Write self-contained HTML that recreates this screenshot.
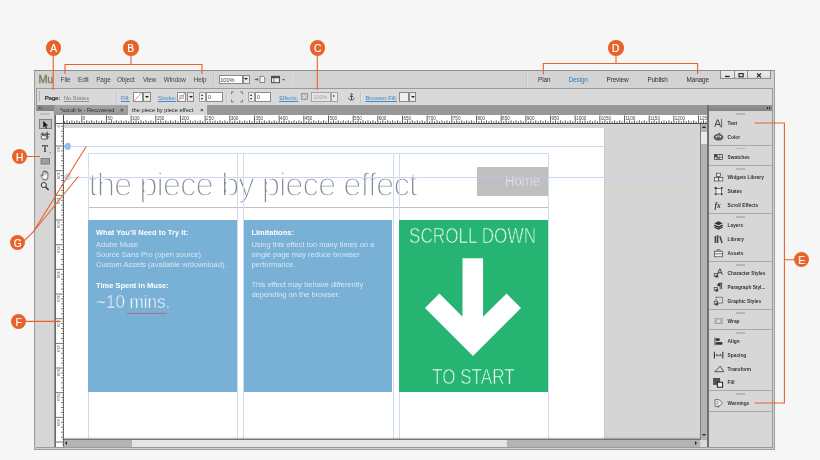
<!DOCTYPE html>
<html><head><meta charset="utf-8"><title>Adobe Muse workspace</title>
<style>
html,body{margin:0;padding:0}
body{width:820px;height:460px;position:relative;overflow:hidden;background:#f6f6f6;font-family:"Liberation Sans",sans-serif;color:#333}
.a{position:absolute}
.t{position:absolute;white-space:nowrap;line-height:1}
.box{position:absolute;background:#fff;border:0.5px solid #8a8a8a;box-sizing:border-box}
.dd{position:absolute;background:#e9e9e9;border:0.5px solid #8a8a8a;box-sizing:border-box}
.sep{position:absolute;width:.8px;background:#c6c6c6;border-right:.8px solid #dfdfdf}
.psep{position:absolute;left:709px;width:63px;height:1px;background:#a9a9a9}
.grip{position:absolute;left:736px;width:9.4px;height:1.5px;background:#b7b7b7}
.rl{position:absolute;font-size:3.6px;color:#444;line-height:1;white-space:nowrap}
.bt{position:absolute;white-space:nowrap;line-height:1;color:#fff;font-size:7.5px}
.lt{color:rgba(255,255,255,.7)}
.circ{position:absolute;width:15.4px;height:15.4px;border-radius:7.7px;background:#e8622c}
.cl{position:absolute;width:15.4px;height:15.4px;color:#fff;font-size:11.4px;line-height:17.6px;text-align:center;-webkit-text-stroke:.2px #fff;transform:scaleX(.9)}
</style></head><body><div id="root" style="position:absolute;left:0;top:0;width:820px;height:460px;will-change:transform">

<div class="a" style="left:34px;top:70px;width:740.6px;height:379.6px;background:#d2d2d2;border:1px solid #9c9c9c;border-top-color:#8c8c8c;box-sizing:border-box"></div>
<div class="a" style="left:35.8px;top:87.6px;width:737.2px;height:360.4px;background:#d6d6d6;border:.9px solid #9a9a9a;box-sizing:border-box"></div>
<div class="a" style="left:35px;top:71px;width:738.6px;height:16.6px;background:#d3d3d3"></div>
<div class="a" style="left:36.7px;top:88.5px;width:735.4px;height:16.4px;background:#d9d9d9;box-sizing:border-box"></div>
<div class="t" style="left:38.6px;top:74px;font-size:10.8px;color:#757b55;letter-spacing:-.3px;-webkit-text-stroke:.3px #757b55;">Mu</div>
<div class="t" style="left:60.6px;top:77px;font-size:6.4px;color:#444;letter-spacing:-.12px;">File</div>
<div class="t" style="left:78px;top:77px;font-size:6.4px;color:#444;letter-spacing:-.12px;">Edit</div>
<div class="t" style="left:96.2px;top:77px;font-size:6.4px;color:#444;letter-spacing:-.12px;">Page</div>
<div class="t" style="left:117px;top:77px;font-size:6.4px;color:#444;letter-spacing:-.12px;">Object</div>
<div class="t" style="left:143px;top:77px;font-size:6.4px;color:#444;letter-spacing:-.12px;">View</div>
<div class="t" style="left:163.8px;top:77px;font-size:6.4px;color:#444;letter-spacing:-.12px;">Window</div>
<div class="t" style="left:193.8px;top:77px;font-size:6.4px;color:#444;letter-spacing:-.12px;">Help</div>
<div class="sep" style="left:213px;top:73px;height:12px"></div>
<div class="box" style="left:218.5px;top:74.5px;width:24px;height:9px"></div>
<div class="t" style="left:220.2px;top:78px;font-size:5.6px;color:#3a3a3a;">100%</div>
<div class="dd" style="left:242.5px;top:74.5px;width:7.5px;height:9px"></div>
<div class="a" style="left:244.25px;top:77.8px;border:2px solid transparent;border-top:2.6px solid #222;border-bottom:0"></div>
<svg class="a" style="left:254px;top:73.5px" width="34" height="11" viewBox="0 0 34 11">
<path d="M.8 5.4h3M2.8 4.2l1.3 1.2-1.3 1.2" stroke="#444" stroke-width=".9" fill="none"/>
<path d="M6 2.3h3.4l1.4 1.4v4.8H6z" fill="#f4f4f4" stroke="#555" stroke-width=".7"/>
<rect x="17.6" y="2.3" width="7.8" height="6.4" fill="#ededed" stroke="#3c3c3c" stroke-width=".9"/>
<rect x="17.6" y="2.3" width="7.8" height="1.9" fill="#484848"/>
<path d="M20 4.2v4.5" stroke="#4a4a4a" stroke-width=".7"/>
<path d="M28 4.9h3l-1.5 1.8z" fill="#555"/>
</svg>
<div class="sep" style="left:291.5px;top:73px;height:13px"></div>
<div class="sep" style="left:526px;top:73px;height:13px"></div>
<div class="t" style="left:538px;top:77px;font-size:6.4px;color:#2f2f2f;letter-spacing:-.12px;">Plan</div>
<div class="t" style="left:568.6px;top:77px;font-size:6.4px;color:#2a7fc4;letter-spacing:-.12px;">Design</div>
<div class="t" style="left:606.5px;top:77px;font-size:6.4px;color:#2f2f2f;letter-spacing:-.12px;">Preview</div>
<div class="t" style="left:647.5px;top:77px;font-size:6.4px;color:#2f2f2f;letter-spacing:-.12px;">Publish</div>
<div class="t" style="left:686.5px;top:77px;font-size:6.4px;color:#2f2f2f;letter-spacing:-.12px;">Manage</div>
<div class="a" style="left:720.2px;top:70.6px;width:50.6px;height:8.8px;background:linear-gradient(to bottom,#ececec,#dedede);border:.8px solid #8e8e8e;border-top:0;box-sizing:border-box"></div>
<div class="a" style="left:734px;top:70.6px;width:.8px;height:8.6px;background:#8e8e8e"></div>
<div class="a" style="left:747.3px;top:70.6px;width:.8px;height:8.6px;background:#8e8e8e"></div>
<svg class="a" style="left:720px;top:70px" width="51" height="9" viewBox="0 0 51 9">
<rect x="5" y="5.8" width="4.6" height="1.3" fill="#222"/>
<rect x="19" y="3.6" width="4.2" height="3.2" fill="none" stroke="#222" stroke-width="1.1"/>
<path d="M37 3.4l4 4M41 3.4l-4 4" stroke="#222" stroke-width="1.3"/>
</svg>
<div class="a" style="left:39px;top:91px;width:1px;height:9.6px;background:#b0b0b0"></div>
<div class="t" style="left:44.8px;top:95px;font-size:6.2px;color:#2a2a2a;font-weight:bold;letter-spacing:-.35px;">Page:</div>
<div class="t" style="left:64px;top:96px;font-size:5.7px;color:#777;text-decoration:underline;text-decoration-thickness:.6px;text-underline-offset:.6px;text-decoration-color:#8d95a3;">No States</div>
<div class="sep" style="left:116px;top:91px;height:12px"></div>
<div class="t" style="left:120.8px;top:96px;font-size:5.9px;color:#4289cb;text-decoration:underline;text-decoration-thickness:.6px;text-underline-offset:.6px;letter-spacing:-.06px;">Fill:</div>
<div class="box" style="left:133px;top:92px;width:9.6px;height:10.2px"></div>
<svg class="a" style="left:133px;top:92px" width="9.6" height="10.2"><path d="M.6 9.6L9 .6" stroke="#e6736c" stroke-width=".8"/></svg>
<div class="dd" style="left:143.2px;top:92px;width:7.4px;height:10.2px"></div>
<div class="a" style="left:144.9px;top:96px;border:2px solid transparent;border-top:2.6px solid #222;border-bottom:0"></div>
<div class="sep" style="left:153.6px;top:91px;height:12px"></div>
<div class="t" style="left:158px;top:96px;font-size:5.9px;color:#4289cb;text-decoration:underline;text-decoration-thickness:.6px;text-underline-offset:.6px;letter-spacing:-.06px;">Stroke:</div>
<div class="box" style="left:177.4px;top:92px;width:9px;height:10.2px"></div>
<svg class="a" style="left:177.4px;top:92px" width="9" height="10.2"><rect x="2.8" y="3.4" width="3.4" height="3.4" fill="#eee" stroke="#9a9a9a" stroke-width=".7"/><path d="M.6 9.6L8.4 .6" stroke="#e6736c" stroke-width=".8"/></svg>
<div class="dd" style="left:187px;top:92px;width:7.4px;height:10.2px"></div>
<div class="a" style="left:188.7px;top:96px;border:2px solid transparent;border-top:2.6px solid #222;border-bottom:0"></div>
<div class="dd" style="left:198.7px;top:92px;width:7.6px;height:10.2px;background:#efefef;border-color:#a2a2a2"></div>
<div class="a" style="left:200.89999999999998px;top:93.8px;border:1.7px solid transparent;border-bottom:2.2px solid #222;border-top:0"></div>
<div class="a" style="left:200.89999999999998px;top:98.2px;border:1.7px solid transparent;border-top:2.2px solid #222;border-bottom:0"></div>
<div class="box" style="left:206.2px;top:92px;width:16.4px;height:10.2px"></div>
<div class="t" style="left:208px;top:95px;font-size:5.4px;color:#444;">0</div>
<div class="sep" style="left:226px;top:91px;height:12px"></div>
<svg class="a" style="left:231px;top:91px" width="12" height="12" viewBox="0 0 12 12">
<path d="M.5 3.2V.9h2.4M9.1 .9h2.4V3.2M11.5 8.6v2.3H9.1M2.9 10.9H.5V8.6" stroke="#707070" stroke-width=".85" fill="none"/></svg>
<div class="dd" style="left:247.8px;top:92px;width:7.6px;height:10.2px;background:#efefef;border-color:#a2a2a2"></div>
<div class="a" style="left:250px;top:93.8px;border:1.7px solid transparent;border-bottom:2.2px solid #222;border-top:0"></div>
<div class="a" style="left:250px;top:98.2px;border:1.7px solid transparent;border-top:2.2px solid #222;border-bottom:0"></div>
<div class="box" style="left:255.2px;top:92px;width:16.2px;height:10.2px"></div>
<div class="t" style="left:257px;top:95px;font-size:5.4px;color:#444;">0</div>
<div class="t" style="left:279.2px;top:96px;font-size:5.9px;color:#4289cb;text-decoration:underline;text-decoration-thickness:.6px;text-underline-offset:.6px;letter-spacing:-.06px;">Effects:</div>
<svg class="a" style="left:301px;top:93.4px" width="7" height="7" viewBox="0 0 7 7"><rect x=".4" y=".4" width="6.2" height="6.2" fill="#b9b9b9" stroke="#8a8a8a" stroke-width=".7"/><path d="M1.6 1.6l3.8 3.8M5.4 1.6L1.6 5.4" stroke="#efefef" stroke-width=".9"/></svg>
<div class="box" style="left:311.2px;top:92px;width:19.6px;height:10.2px;background:#e4e4e4;border-color:#a5a5a5"></div>
<div class="t" style="left:313.5px;top:95px;font-size:5.4px;color:#a0a0a0;">100%</div>
<div class="dd" style="left:330.8px;top:92px;width:6.8px;height:10.2px;border-color:#a5a5a5"></div>
<div class="a" style="left:333.2px;top:95.4px;border:1.7px solid transparent;border-left:2.3px solid #333;border-right:0"></div>
<div class="sep" style="left:341.6px;top:91px;height:12px"></div>
<svg class="a" style="left:347.8px;top:93.4px" width="7" height="7.9" viewBox="0 0 8 9">
<circle cx="4" cy="1.6" r="1" fill="none" stroke="#333" stroke-width=".8"/><path d="M4 2.6v5.4M2.2 4h3.6M.8 5.6c.3 1.6 1.6 2.4 3.2 2.4s2.9-.8 3.2-2.4" stroke="#333" stroke-width=".9" fill="none"/></svg>
<div class="sep" style="left:360px;top:91px;height:12px"></div>
<div class="t" style="left:365.4px;top:96px;font-size:5.9px;color:#4289cb;text-decoration:underline;text-decoration-thickness:.6px;text-underline-offset:.6px;letter-spacing:-.06px;">Browser Fill:</div>
<div class="box" style="left:399.4px;top:92px;width:9.4px;height:10.2px;background:#f0f0e6"></div>
<div class="dd" style="left:409px;top:92px;width:7.4px;height:10.2px"></div>
<div class="a" style="left:410.7px;top:96px;border:2px solid transparent;border-top:2.6px solid #222;border-bottom:0"></div>
<div class="a" style="left:36.6px;top:104.9px;width:735.6px;height:10px;background:#989898"></div>
<div class="a" style="left:36.6px;top:105px;width:17.8px;height:6.8px;background:linear-gradient(to bottom,#8e8e8e,#7f7f7f)"></div>
<svg class="a" style="left:37.6px;top:106.4px" width="5" height="4"><path d="M.7 .6l1.3 1.3-1.3 1.3M2.7 .6l1.3 1.3-1.3 1.3" stroke="#3a3a3a" stroke-width=".7" fill="none"/></svg>
<div class="a" style="left:55.4px;top:105px;width:72.1px;height:10px;background:linear-gradient(to bottom,#a6a6a6,#979797)"></div>
<div class="a" style="left:127.5px;top:105px;width:79.5px;height:10px;background:#d7d7d7"></div>
<div class="t" style="left:60.1px;top:108px;font-size:5.7px;color:#2c2c2c;">*scroll-fx - Recovered</div>
<div class="t" style="left:120.3px;top:108px;font-size:5.6px;color:#333;font-weight:bold;">&#215;</div>
<div class="t" style="left:132px;top:108px;font-size:5.7px;color:#222;">the piece by piece effect</div>
<div class="t" style="left:200.2px;top:108px;font-size:5.6px;color:#333;font-weight:bold;">&#215;</div>
<div class="a" style="left:36px;top:111px;width:18.5px;height:336px;background:#d6d6d6"></div>
<div class="a" style="left:54.4px;top:111px;width:.8px;height:336px;background:#8f8f8f"></div>
<div class="a" style="left:40.2px;top:113.2px;width:9.7px;height:1.6px;background:#bebebe"></div>
<div class="a" style="left:39.2px;top:119.4px;width:12.6px;height:10px;background:#bcbcbc;border:.7px solid #808080;box-sizing:border-box"></div>
<svg class="a" style="left:36px;top:117px" width="18" height="76" viewBox="0 0 18 76">
<path d="M7.2 3.8v7l1.7-1.6 1.1 2.5 1.1-.5-1.1-2.4h2.3z" fill="#1e1e1e"/>
<g stroke="#3c3c3c" fill="none"><path d="M4.6 17.2h9.2" stroke-width="1"/><path d="M11.2 14.6v8" stroke-width="1"/><path d="M6.8 15v3" stroke-width=".8"/><ellipse cx="7.8" cy="20.3" rx="2.8" ry="2.1" fill="#e9e9e9" stroke-width=".8"/><path d="M9.6 16l3.4 4.8" stroke-width=".7"/></g>
<path d="M6 28.3h6v1.7h-.45c-.2-.8-.5-1.05-1.3-1.05h-.6v4.7c0 .5.2.65.95.75v.45H7.4v-.45c.75-.1.95-.25.95-.75v-4.7h-.6c-.8 0-1.1.25-1.3 1.05H6z" fill="#333"/>
<path d="M13.4 36.2l1.2-1.2v1.2z" fill="#333"/>
<rect x="5" y="41.5" width="8.6" height="5.6" fill="#9e9e9e" stroke="#686868" stroke-width=".7"/>
<path d="M3.5 51h11" stroke="#bbb" stroke-width=".8"/>
<path d="M6.6 61.6c-.9-1.7-2.2-2.9-1.6-3.5.6-.5 1.3.2 1.9 1v-4c0-.9 1.2-.9 1.2 0v-.8c0-.9 1.3-.9 1.3 0v.6c0-.9 1.3-.9 1.3 0v1c0-.8 1.2-.8 1.2 0v3.7c0 1.1-.6 1.8-1 2.4v.8H7.4v-.8z" fill="#f4f4f4" stroke="#333" stroke-width=".7"/>
<path d="M8.1 55.2v2.6M9.4 55v2.8M10.7 55.8v2" stroke="#555" stroke-width=".4"/>
<circle cx="7.8" cy="68" r="2.5" fill="#e8e8e8" stroke="#333" stroke-width="1"/><path d="M9.7 70l2.9 3" stroke="#333" stroke-width="1.5"/>
</svg>
<div class="a" style="left:55px;top:115px;width:652.6px;height:8.4px;background:#fff"></div>
<div class="a" style="left:55px;top:114.8px;width:8.8px;height:332.2px;background:#fff"></div>
<div class="a" style="left:55px;top:123.4px;width:9px;height:.6px;background:#777"></div>
<div class="a" style="left:54.5px;top:115px;width:.9px;height:332px;background:#6c6c6c"></div>
<div class="a" style="left:63.3px;top:115px;width:.7px;height:8.4px;background:#4a4a4a"></div><div class="a" style="left:63.4px;top:123.4px;width:.6px;height:323.6px;background:#777"></div>
<div class="a" style="left:64px;top:122.6px;width:643.6px;height:.9px;background:#4a4a4a"></div>
<svg class="a" style="left:0;top:115px" width="820" height="8"><path d="M64.53 6.3v1.7M67 5.3v2.7M69.47 6.3v1.7M71.93 5.3v2.7M74.4 6.3v1.7M76.87 5.3v2.7M79.33 6.3v1.7M81.8 .5v7.5M84.27 6.3v1.7M86.73 5.3v2.7M89.2 6.3v1.7M91.67 5.3v2.7M94.13 6.3v1.7M96.6 5.3v2.7M99.07 6.3v1.7M101.54 5.3v2.7M104 6.3v1.7M106.47 .5v7.5M108.94 6.3v1.7M111.4 5.3v2.7M113.87 6.3v1.7M116.34 5.3v2.7M118.81 6.3v1.7M121.27 5.3v2.7M123.74 6.3v1.7M126.21 5.3v2.7M128.67 6.3v1.7M131.14 .5v7.5M133.61 6.3v1.7M136.07 5.3v2.7M138.54 6.3v1.7M141.01 5.3v2.7M143.47 6.3v1.7M145.94 5.3v2.7M148.41 6.3v1.7M150.88 5.3v2.7M153.34 6.3v1.7M155.81 .5v7.5M158.28 6.3v1.7M160.74 5.3v2.7M163.21 6.3v1.7M165.68 5.3v2.7M168.14 6.3v1.7M170.61 5.3v2.7M173.08 6.3v1.7M175.55 5.3v2.7M178.01 6.3v1.7M180.48 .5v7.5M182.95 6.3v1.7M185.41 5.3v2.7M187.88 6.3v1.7M190.35 5.3v2.7M192.81 6.3v1.7M195.28 5.3v2.7M197.75 6.3v1.7M200.22 5.3v2.7M202.68 6.3v1.7M205.15 .5v7.5M207.62 6.3v1.7M210.08 5.3v2.7M212.55 6.3v1.7M215.02 5.3v2.7M217.49 6.3v1.7M219.95 5.3v2.7M222.42 6.3v1.7M224.89 5.3v2.7M227.35 6.3v1.7M229.82 .5v7.5M232.29 6.3v1.7M234.75 5.3v2.7M237.22 6.3v1.7M239.69 5.3v2.7M242.16 6.3v1.7M244.62 5.3v2.7M247.09 6.3v1.7M249.56 5.3v2.7M252.02 6.3v1.7M254.49 .5v7.5M256.96 6.3v1.7M259.42 5.3v2.7M261.89 6.3v1.7M264.36 5.3v2.7M266.83 6.3v1.7M269.29 5.3v2.7M271.76 6.3v1.7M274.23 5.3v2.7M276.69 6.3v1.7M279.16 .5v7.5M281.63 6.3v1.7M284.09 5.3v2.7M286.56 6.3v1.7M289.03 5.3v2.7M291.5 6.3v1.7M293.96 5.3v2.7M296.43 6.3v1.7M298.9 5.3v2.7M301.36 6.3v1.7M303.83 .5v7.5M306.3 6.3v1.7M308.76 5.3v2.7M311.23 6.3v1.7M313.7 5.3v2.7M316.17 6.3v1.7M318.63 5.3v2.7M321.1 6.3v1.7M323.57 5.3v2.7M326.03 6.3v1.7M328.5 .5v7.5M330.97 6.3v1.7M333.43 5.3v2.7M335.9 6.3v1.7M338.37 5.3v2.7M340.84 6.3v1.7M343.3 5.3v2.7M345.77 6.3v1.7M348.24 5.3v2.7M350.7 6.3v1.7M353.17 .5v7.5M355.64 6.3v1.7M358.1 5.3v2.7M360.57 6.3v1.7M363.04 5.3v2.7M365.51 6.3v1.7M367.97 5.3v2.7M370.44 6.3v1.7M372.91 5.3v2.7M375.37 6.3v1.7M377.84 .5v7.5M380.31 6.3v1.7M382.77 5.3v2.7M385.24 6.3v1.7M387.71 5.3v2.7M390.18 6.3v1.7M392.64 5.3v2.7M395.11 6.3v1.7M397.58 5.3v2.7M400.04 6.3v1.7M402.51 .5v7.5M404.98 6.3v1.7M407.44 5.3v2.7M409.91 6.3v1.7M412.38 5.3v2.7M414.85 6.3v1.7M417.31 5.3v2.7M419.78 6.3v1.7M422.25 5.3v2.7M424.71 6.3v1.7M427.18 .5v7.5M429.65 6.3v1.7M432.11 5.3v2.7M434.58 6.3v1.7M437.05 5.3v2.7M439.52 6.3v1.7M441.98 5.3v2.7M444.45 6.3v1.7M446.92 5.3v2.7M449.38 6.3v1.7M451.85 .5v7.5M454.32 6.3v1.7M456.78 5.3v2.7M459.25 6.3v1.7M461.72 5.3v2.7M464.19 6.3v1.7M466.65 5.3v2.7M469.12 6.3v1.7M471.59 5.3v2.7M474.05 6.3v1.7M476.52 .5v7.5M478.99 6.3v1.7M481.45 5.3v2.7M483.92 6.3v1.7M486.39 5.3v2.7M488.86 6.3v1.7M491.32 5.3v2.7M493.79 6.3v1.7M496.26 5.3v2.7M498.72 6.3v1.7M501.19 .5v7.5M503.66 6.3v1.7M506.12 5.3v2.7M508.59 6.3v1.7M511.06 5.3v2.7M513.52 6.3v1.7M515.99 5.3v2.7M518.46 6.3v1.7M520.93 5.3v2.7M523.39 6.3v1.7M525.86 .5v7.5M528.33 6.3v1.7M530.79 5.3v2.7M533.26 6.3v1.7M535.73 5.3v2.7M538.2 6.3v1.7M540.66 5.3v2.7M543.13 6.3v1.7M545.6 5.3v2.7M548.06 6.3v1.7M550.53 .5v7.5M553 6.3v1.7M555.46 5.3v2.7M557.93 6.3v1.7M560.4 5.3v2.7M562.87 6.3v1.7M565.33 5.3v2.7M567.8 6.3v1.7M570.27 5.3v2.7M572.73 6.3v1.7M575.2 .5v7.5M577.67 6.3v1.7M580.13 5.3v2.7M582.6 6.3v1.7M585.07 5.3v2.7M587.53 6.3v1.7M590 5.3v2.7M592.47 6.3v1.7M594.94 5.3v2.7M597.4 6.3v1.7M599.87 .5v7.5M602.34 6.3v1.7M604.8 5.3v2.7M607.27 6.3v1.7M609.74 5.3v2.7M612.2 6.3v1.7M614.67 5.3v2.7M617.14 6.3v1.7M619.61 5.3v2.7M622.07 6.3v1.7M624.54 .5v7.5M627.01 6.3v1.7M629.47 5.3v2.7M631.94 6.3v1.7M634.41 5.3v2.7M636.88 6.3v1.7M639.34 5.3v2.7M641.81 6.3v1.7M644.28 5.3v2.7M646.74 6.3v1.7M649.21 .5v7.5M651.68 6.3v1.7M654.14 5.3v2.7M656.61 6.3v1.7M659.08 5.3v2.7M661.55 6.3v1.7M664.01 5.3v2.7M666.48 6.3v1.7M668.95 5.3v2.7M671.41 6.3v1.7M673.88 .5v7.5M676.35 6.3v1.7M678.81 5.3v2.7M681.28 6.3v1.7M683.75 5.3v2.7M686.22 6.3v1.7M688.68 5.3v2.7M691.15 6.3v1.7M693.62 5.3v2.7M696.08 6.3v1.7M698.55 .5v7.5M701.02 6.3v1.7M703.48 5.3v2.7M705.95 6.3v1.7" stroke="#333" stroke-width=".8" fill="none"/></svg>
<div class="t" style="left:82.7px;top:117px;font-size:4.6px;color:#444;">0</div>
<div class="t" style="left:107.4px;top:117px;font-size:4.6px;color:#444;">50</div>
<div class="t" style="left:132px;top:117px;font-size:4.6px;color:#444;">100</div>
<div class="t" style="left:156.7px;top:117px;font-size:4.6px;color:#444;">150</div>
<div class="t" style="left:181.4px;top:117px;font-size:4.6px;color:#444;">200</div>
<div class="t" style="left:206.1px;top:117px;font-size:4.6px;color:#444;">250</div>
<div class="t" style="left:230.7px;top:117px;font-size:4.6px;color:#444;">300</div>
<div class="t" style="left:255.4px;top:117px;font-size:4.6px;color:#444;">350</div>
<div class="t" style="left:280.1px;top:117px;font-size:4.6px;color:#444;">400</div>
<div class="t" style="left:304.7px;top:117px;font-size:4.6px;color:#444;">450</div>
<div class="t" style="left:329.4px;top:117px;font-size:4.6px;color:#444;">500</div>
<div class="t" style="left:354.1px;top:117px;font-size:4.6px;color:#444;">550</div>
<div class="t" style="left:378.7px;top:117px;font-size:4.6px;color:#444;">600</div>
<div class="t" style="left:403.4px;top:117px;font-size:4.6px;color:#444;">650</div>
<div class="t" style="left:428.1px;top:117px;font-size:4.6px;color:#444;">700</div>
<div class="t" style="left:452.8px;top:117px;font-size:4.6px;color:#444;">750</div>
<div class="t" style="left:477.4px;top:117px;font-size:4.6px;color:#444;">800</div>
<div class="t" style="left:502.1px;top:117px;font-size:4.6px;color:#444;">850</div>
<div class="t" style="left:526.8px;top:117px;font-size:4.6px;color:#444;">900</div>
<div class="t" style="left:551.4px;top:117px;font-size:4.6px;color:#444;">950</div>
<div class="t" style="left:576.1px;top:117px;font-size:4.6px;color:#444;">1000</div>
<div class="t" style="left:600.8px;top:117px;font-size:4.6px;color:#444;">1050</div>
<div class="t" style="left:625.4px;top:117px;font-size:4.6px;color:#444;">1100</div>
<div class="t" style="left:650.1px;top:117px;font-size:4.6px;color:#444;">1150</div>
<div class="t" style="left:674.8px;top:117px;font-size:4.6px;color:#444;">1200</div>
<div class="t" style="left:699.4px;top:117px;font-size:4.6px;color:#444;">1250</div>
<svg class="a" style="left:55px;top:0" width="9" height="460"><path d="M6 126.26h3M7.4 128.73h1.6M6 131.2h3M7.4 133.66h1.6M6 136.13h3M7.4 138.6h1.6M6 141.07h3M7.4 143.53h1.6M1 146h8M7.4 148.47h1.6M6 150.93h3M7.4 153.4h1.6M6 155.87h3M7.4 158.34h1.6M6 160.8h3M7.4 163.27h1.6M6 165.74h3M7.4 168.2h1.6M1 170.67h8M7.4 173.14h1.6M6 175.6h3M7.4 178.07h1.6M6 180.54h3M7.4 183h1.6M6 185.47h3M7.4 187.94h1.6M6 190.41h3M7.4 192.87h1.6M1 195.34h8M7.4 197.81h1.6M6 200.27h3M7.4 202.74h1.6M6 205.21h3M7.4 207.68h1.6M6 210.14h3M7.4 212.61h1.6M6 215.08h3M7.4 217.54h1.6M1 220.01h8M7.4 222.48h1.6M6 224.94h3M7.4 227.41h1.6M6 229.88h3M7.4 232.34h1.6M6 234.81h3M7.4 237.28h1.6M6 239.75h3M7.4 242.21h1.6M1 244.68h8M7.4 247.15h1.6M6 249.61h3M7.4 252.08h1.6M6 254.55h3M7.4 257.01h1.6M6 259.48h3M7.4 261.95h1.6M6 264.42h3M7.4 266.88h1.6M1 269.35h8M7.4 271.82h1.6M6 274.28h3M7.4 276.75h1.6M6 279.22h3M7.4 281.69h1.6M6 284.15h3M7.4 286.62h1.6M6 289.09h3M7.4 291.55h1.6M1 294.02h8M7.4 296.49h1.6M6 298.95h3M7.4 301.42h1.6M6 303.89h3M7.4 306.36h1.6M6 308.82h3M7.4 311.29h1.6M6 313.76h3M7.4 316.22h1.6M1 318.69h8M7.4 321.16h1.6M6 323.62h3M7.4 326.09h1.6M6 328.56h3M7.4 331.03h1.6M6 333.49h3M7.4 335.96h1.6M6 338.43h3M7.4 340.89h1.6M1 343.36h8M7.4 345.83h1.6M6 348.29h3M7.4 350.76h1.6M6 353.23h3M7.4 355.7h1.6M6 358.16h3M7.4 360.63h1.6M6 363.1h3M7.4 365.56h1.6M1 368.03h8M7.4 370.5h1.6M6 372.96h3M7.4 375.43h1.6M6 377.9h3M7.4 380.37h1.6M6 382.83h3M7.4 385.3h1.6M6 387.77h3M7.4 390.23h1.6M1 392.7h8M7.4 395.17h1.6M6 397.63h3M7.4 400.1h1.6M6 402.57h3M7.4 405.04h1.6M6 407.5h3M7.4 409.97h1.6M6 412.44h3M7.4 414.9h1.6M1 417.37h8M7.4 419.84h1.6M6 422.3h3M7.4 424.77h1.6M6 427.24h3M7.4 429.71h1.6M6 432.17h3M7.4 434.64h1.6M6 437.11h3M7.4 439.57h1.6M1 442.04h8M7.4 444.51h1.6M0 123.6h9" stroke="#444" stroke-width=".75" fill="none"/></svg>
<div class="rl" style="left:56.2px;top:147.2px;font-size:4.2px;color:#666;transform-origin:0 0;transform:rotate(90deg) translate(0,-4px)">50</div>
<div class="rl" style="left:56.2px;top:171.9px;font-size:4.2px;color:#666;transform-origin:0 0;transform:rotate(90deg) translate(0,-4px)">100</div>
<div class="rl" style="left:56.2px;top:196.5px;font-size:4.2px;color:#666;transform-origin:0 0;transform:rotate(90deg) translate(0,-4px)">150</div>
<div class="rl" style="left:56.2px;top:221.2px;font-size:4.2px;color:#666;transform-origin:0 0;transform:rotate(90deg) translate(0,-4px)">200</div>
<div class="rl" style="left:56.2px;top:245.9px;font-size:4.2px;color:#666;transform-origin:0 0;transform:rotate(90deg) translate(0,-4px)">250</div>
<div class="rl" style="left:56.2px;top:270.6px;font-size:4.2px;color:#666;transform-origin:0 0;transform:rotate(90deg) translate(0,-4px)">300</div>
<div class="rl" style="left:56.2px;top:295.2px;font-size:4.2px;color:#666;transform-origin:0 0;transform:rotate(90deg) translate(0,-4px)">350</div>
<div class="rl" style="left:56.2px;top:319.9px;font-size:4.2px;color:#666;transform-origin:0 0;transform:rotate(90deg) translate(0,-4px)">400</div>
<div class="rl" style="left:56.2px;top:344.6px;font-size:4.2px;color:#666;transform-origin:0 0;transform:rotate(90deg) translate(0,-4px)">450</div>
<div class="rl" style="left:56.2px;top:369.2px;font-size:4.2px;color:#666;transform-origin:0 0;transform:rotate(90deg) translate(0,-4px)">500</div>
<div class="rl" style="left:56.2px;top:393.9px;font-size:4.2px;color:#666;transform-origin:0 0;transform:rotate(90deg) translate(0,-4px)">550</div>
<div class="rl" style="left:56.2px;top:418.6px;font-size:4.2px;color:#666;transform-origin:0 0;transform:rotate(90deg) translate(0,-4px)">600</div>
<div class="rl" style="left:56.2px;top:124.6px;font-size:4.2px;color:#666;transform-origin:0 0;transform:rotate(90deg) translate(0,-4px)">0</div>
<div class="a" style="left:64px;top:123.5px;width:637px;height:315.5px;background:#d5d5d5"></div>
<div class="a" style="left:64px;top:127.6px;width:540.2px;height:311.4px;background:#fff;border-right:.8px solid #c9c9c9"></div>
<div class="t" id="title" style="left:88.6px;top:167.5px;font-size:33px;letter-spacing:-1.08px;color:#858b91;-webkit-text-stroke:1.55px #fff">the piece by piece effect</div>
<div class="a" style="left:64px;top:146.3px;width:637px;height:.8px;background:#cad6ed"></div>
<div class="a" style="left:64px;top:176.8px;width:637px;height:.8px;background:#cad6ed"></div>
<svg class="a" style="left:64px;top:142px" width="7" height="40"><path d="M.3 4.4l1.9-2.8h3q.8 0 .8.8v4q0 .8-.8.8h-3z" fill="#8fc4ee" stroke="#5f9fd8" stroke-width=".6"/><path d="M.3 34.8l1.9-2.8h3q.8 0 .8.8v4q0 .8-.8.8h-3z" fill="#d3dff1" stroke="#bccbe8" stroke-width=".6"/></svg>
<div class="a" style="left:88px;top:153.2px;width:460px;height:.8px;background:#cedef2"></div>
<div class="a" style="left:88px;top:207.1px;width:460px;height:.8px;background:#c0c0c0"></div>
<div class="a" style="left:88px;top:153.2px;width:.8px;height:285.8px;background:#cedef2"></div>
<div class="a" style="left:236.6px;top:153.2px;width:.8px;height:285.8px;background:#cedef2"></div>
<div class="a" style="left:243.4px;top:153.2px;width:.8px;height:285.8px;background:#cedef2"></div>
<div class="a" style="left:392.6px;top:153.2px;width:.8px;height:285.8px;background:#cedef2"></div>
<div class="a" style="left:399.1px;top:153.2px;width:.8px;height:285.8px;background:#cedef2"></div>
<div class="a" style="left:547.6px;top:153.2px;width:.8px;height:285.8px;background:#cedef2"></div>
<div class="a" style="left:476.6px;top:167.3px;width:71.6px;height:28.4px;background:#bfbfbf"></div>
<div class="t" style="left:504.5px;top:174px;font-size:14.6px;color:#f2f2f2;-webkit-text-stroke:.55px #bfbfbf;transform-origin:0 0;transform:scaleX(.9)">Home</div>
<div class="a" style="left:476px;top:176.8px;width:73px;height:.8px;background:#b7c9e8;opacity:.9"></div>
<div class="a" style="left:88.4px;top:219.5px;width:148.4px;height:172.2px;background:#79b0d5"></div>
<div class="a" style="left:243.8px;top:219.5px;width:148.4px;height:172.2px;background:#79b0d5"></div>
<div class="a" style="left:399.4px;top:219.5px;width:148.4px;height:172.2px;background:#25b472"></div>
<div class="bt" style="left:96px;top:229px;font-weight:bold;font-size:7.5px">What You&#8217;ll Need to Try It:</div>
<div class="bt lt" style="left:96px;top:240.6px">Adobe Muse</div>
<div class="bt lt" style="left:96px;top:250.8px">Source Sans Pro (open source)</div>
<div class="bt lt" style="left:96px;top:260.9px">Custom Assets (available w/download).</div>
<div class="bt" style="left:96px;top:281.7px;font-weight:bold;font-size:7.5px">Time Spent in Muse:</div>
<div class="bt" style="left:96px;top:292.5px;font-size:18.5px;transform-origin:0 0;transform:scaleX(.92);color:rgba(255,255,255,.9);-webkit-text-stroke:.42px #79b0d5">~10 mins.</div>
<svg class="a" style="left:127.3px;top:311.6px" width="42" height="3"><path d="M0 1.7l1 -0.5l1 0.5l1 -0.5l1 0.5l1 -0.5l1 0.5l1 -0.5l1 0.5l1 -0.5l1 0.5l1 -0.5l1 0.5l1 -0.5l1 0.5l1 -0.5l1 0.5l1 -0.5l1 0.5l1 -0.5l1 0.5l1 -0.5l1 0.5l1 -0.5l1 0.5l1 -0.5l1 0.5l1 -0.5l1 0.5l1 -0.5l1 0.5l1 -0.5l1 0.5l1 -0.5l1 0.5l1 -0.5l1 0.5l1 -0.5l1 0.5l1 -0.5l1 0.5" stroke="#c4627c" stroke-width=".9" fill="none"/></svg>
<div class="bt" style="left:251.4px;top:229px;font-weight:bold;font-size:7.5px">Limitations:</div>
<div class="bt lt" style="left:251.4px;top:241px">Using this effect too many times on a</div>
<div class="bt lt" style="left:251.4px;top:251px">single page may reduce browser</div>
<div class="bt lt" style="left:251.4px;top:260.9px">performance.</div>
<div class="bt lt" style="left:251.4px;top:281px">This effect may behave differently</div>
<div class="bt lt" style="left:251.4px;top:290.8px">depending on the browser.</div>
<div class="bt" style="left:409.3px;top:225px;font-size:22.5px;transform-origin:0 0;transform:scaleX(.762);color:#ecf9f2;-webkit-text-stroke:.65px #25b472">SCROLL DOWN</div>
<svg class="a" style="left:399px;top:219px" width="150" height="173"><polygon points="63.5,39.3 84.1,39.3 84.1,97.8 107.6,74.5 122,89 74,137 26,89 40.4,74.5 63.5,97.8" fill="#fff"/></svg>
<div class="bt" style="left:432.4px;top:366px;font-size:22.5px;transform-origin:0 0;transform:scaleX(.76);color:#ecf9f2;-webkit-text-stroke:.65px #25b472">TO START</div>
<div class="a" style="left:64px;top:437.2px;width:636.4px;height:2.6px;background:linear-gradient(to bottom,rgba(90,90,90,0),rgba(90,90,90,.3) 45%,rgba(80,80,80,.95))"></div>
<div class="a" style="left:64px;top:439.6px;width:637px;height:7.4px;background:#b3b3b3"></div>
<div class="a" style="left:131.7px;top:439.6px;width:375px;height:7.4px;background:#e4e6e4"></div>
<div class="a" style="left:65px;top:441.3px;border:2px solid transparent;border-right:2.7px solid #222;border-left:0"></div>
<div class="a" style="left:694.6px;top:441.3px;border:2px solid transparent;border-left:2.7px solid #222;border-right:0"></div>
<div class="a" style="left:700.2px;top:123.5px;width:7.6px;height:316px;background:#b3b3b3;border-left:1px solid #7e7e7e;box-sizing:border-box"></div>
<div class="a" style="left:701.2px;top:131.8px;width:6.4px;height:12.4px;background:#e9eae9"></div>
<div class="a" style="left:702.1px;top:125.9px;border:2px solid transparent;border-bottom:2.8px solid #1c1c1c;border-top:0"></div>
<div class="a" style="left:702.1px;top:434.3px;border:2px solid transparent;border-top:2.8px solid #1c1c1c;border-bottom:0"></div>
<div class="a" style="left:700.4px;top:439.8px;width:7.4px;height:7.4px;background:#dadada"></div>
<div class="a" style="left:707.2px;top:105px;width:1.9px;height:342.4px;background:#707070"></div>
<div class="a" style="left:709.1px;top:104.9px;width:63.2px;height:6.4px;background:linear-gradient(to bottom,#919191,#828682)"></div>
<div class="a" style="left:766.8px;top:107.2px;width:1.1px;height:1.6px;background:#2a2a2a"></div><div class="a" style="left:768.9px;top:107.2px;width:1.1px;height:1.6px;background:#2a2a2a"></div>
<div class="a" style="left:709.1px;top:111.3px;width:63.1px;height:335.9px;background:#d7d7d7"></div>
<div class="t" style="left:727.6px;top:122px;font-size:4.8px;color:#333;font-weight:bold;">Text</div>
<div class="t" style="left:727.6px;top:136px;font-size:4.8px;color:#333;font-weight:bold;">Color</div>
<div class="t" style="left:727.6px;top:156px;font-size:4.8px;color:#333;font-weight:bold;">Swatches</div>
<div class="t" style="left:727.6px;top:176px;font-size:4.8px;color:#333;font-weight:bold;">Widgets Library</div>
<div class="t" style="left:727.6px;top:190px;font-size:4.8px;color:#333;font-weight:bold;">States</div>
<div class="t" style="left:727.6px;top:204px;font-size:4.8px;color:#333;font-weight:bold;">Scroll Effects</div>
<div class="t" style="left:727.6px;top:224px;font-size:4.8px;color:#333;font-weight:bold;">Layers</div>
<div class="t" style="left:727.6px;top:238px;font-size:4.8px;color:#333;font-weight:bold;">Library</div>
<div class="t" style="left:727.6px;top:252px;font-size:4.8px;color:#333;font-weight:bold;">Assets</div>
<div class="t" style="left:727.6px;top:272px;font-size:4.8px;color:#333;font-weight:bold;">Character Styles</div>
<div class="t" style="left:727.6px;top:286px;font-size:4.8px;color:#333;font-weight:bold;">Paragraph Styl...</div>
<div class="t" style="left:727.6px;top:300px;font-size:4.8px;color:#333;font-weight:bold;">Graphic Styles</div>
<div class="t" style="left:727.6px;top:320px;font-size:4.8px;color:#333;font-weight:bold;">Wrap</div>
<div class="t" style="left:727.6px;top:340px;font-size:4.8px;color:#333;font-weight:bold;">Align</div>
<div class="t" style="left:727.6px;top:354px;font-size:4.8px;color:#333;font-weight:bold;">Spacing</div>
<div class="t" style="left:727.6px;top:368px;font-size:4.8px;color:#333;font-weight:bold;">Transform</div>
<div class="t" style="left:727.6px;top:381px;font-size:4.8px;color:#333;font-weight:bold;">Fill</div>
<div class="t" style="left:727.6px;top:402px;font-size:4.8px;color:#333;font-weight:bold;">Warnings</div>
<div class="psep" style="top:144.7px"></div>
<div class="psep" style="top:165.1px"></div>
<div class="psep" style="top:212.7px"></div>
<div class="psep" style="top:261px"></div>
<div class="psep" style="top:308.8px"></div>
<div class="psep" style="top:328.9px"></div>
<div class="psep" style="top:389.9px"></div>
<div class="psep" style="top:411px"></div>
<div class="grip" style="top:113.3px"></div>
<div class="grip" style="top:147.9px"></div>
<div class="grip" style="top:168.4px"></div>
<div class="grip" style="top:216px"></div>
<div class="grip" style="top:264.4px"></div>
<div class="grip" style="top:312px"></div>
<div class="grip" style="top:332.2px"></div>
<div class="grip" style="top:393.4px"></div>
<svg class="a" style="left:711px;top:116px" width="16" height="296" viewBox="0 0 16 296"><g transform="translate(0,2)"><path d="M3.8 8.8L6.3 1.8h.7l2.5 7M4.7 6.4h3.9" stroke="#333" stroke-width=".9" fill="none"/><path d="M10.6 1v8.6" stroke="#333" stroke-width=".7"/></g><g transform="translate(0,15.7)"><ellipse cx="7.5" cy="5.6" rx="4.4" ry="2.8" fill="#666" stroke="#333" stroke-width=".7"/><circle cx="5.6" cy="5" r=".8" fill="#eee"/><circle cx="7.5" cy="4.3" r=".8" fill="#eee"/><circle cx="9.4" cy="5" r=".8" fill="#eee"/><path d="M6.8 2.2l2.6-.8" stroke="#333" stroke-width=".8"/></g><g transform="translate(0,36)"><rect x="3.5" y="2.6" width="8" height="5" fill="#eee" stroke="#333" stroke-width=".7"/><path d="M3.5 5.1h8M6.2 2.6v5M8.8 2.6v5" stroke="#333" stroke-width=".6"/><rect x="3.5" y="2.6" width="2.7" height="2.5" fill="#444"/><rect x="6.2" y="5.1" width="2.6" height="2.5" fill="#777"/></g><g transform="translate(0,56.2)"><g fill="#e8e8e8" stroke="#444" stroke-width=".7"><rect x="5.6" y="1" width="4" height="3.4"/><rect x="3.4" y="5.4" width="4" height="3.4"/><rect x="7.8" y="5.4" width="4" height="3.4"/></g></g><g transform="translate(0,70)"><rect x="5" y="2.4" width="5.6" height="5.6" fill="#eee" stroke="#444" stroke-width=".7"/><g fill="#333"><rect x="3.6" y="1" width="2" height="2"/><rect x="10" y="1" width="1.6" height="1.6"/><rect x="3.8" y="7.4" width="1.6" height="1.6"/><rect x="10" y="7.4" width="1.6" height="1.6"/></g></g><g transform="translate(0,83.9)"><text x="3.4" y="8" font-size="7.6" font-style="italic" font-weight="bold" font-family="Liberation Serif,serif" fill="#333">fx</text></g><g transform="translate(0,104)"><path d="M7.5 1.2l4.2 2-4.2 2-4.2-2z" fill="#333"/><path d="M3.3 5.2l4.2 2 4.2-2M3.3 7l4.2 2 4.2-2" stroke="#333" stroke-width="1.3" fill="none"/></g><g transform="translate(0,118)"><g fill="#444"><rect x="3.6" y="2" width="1.6" height="7"/><rect x="5.8" y="1.2" width="1.6" height="7.8"/><path d="M8.2 2.6l1.4-.5 2.2 6.6-1.4.5z"/></g></g><g transform="translate(0,132)"><rect x="3.6" y="3.2" width="8" height="5.6" fill="#eee" stroke="#444" stroke-width=".7"/><path d="M6 3.2V1.8h3.2v1.4M3.6 5.8h8" stroke="#444" stroke-width=".7" fill="none"/></g><g transform="translate(0,152)"><path d="M6.4 6.6l2.2-5.6h.6l2.2 5.6M7.3 4.8h3.2" stroke="#333" stroke-width=".9" fill="none"/><rect x="3.2" y="5.4" width="3.2" height="3.2" fill="#e4e4e4" stroke="#3a3a3a" stroke-width=".7"/><circle cx="5.8" cy="8.3" r="1.3" fill="#555" stroke="#333" stroke-width=".5"/></g><g transform="translate(0,166)"><path d="M8 1.2h3.4M9.2 1.2v6M10.6 1.2v6" stroke="#333" stroke-width=".8"/><path d="M7 1.2h2.2v3H7.8a1.5 1.5 0 010-3z" fill="#333"/><rect x="3.2" y="5.4" width="3.2" height="3.2" fill="#e4e4e4" stroke="#3a3a3a" stroke-width=".7"/><circle cx="5.8" cy="8.3" r="1.3" fill="#555" stroke="#333" stroke-width=".5"/></g><g transform="translate(0,179.8)"><rect x="5" y="1.4" width="6.6" height="6" fill="none" stroke="#333" stroke-width=".8" stroke-dasharray="1.4 .8"/><rect x="3.2" y="5.4" width="3.2" height="3.2" fill="#e4e4e4" stroke="#3a3a3a" stroke-width=".7"/><circle cx="5.8" cy="8.3" r="1.3" fill="#555" stroke="#333" stroke-width=".5"/></g><g transform="translate(0,200)"><rect x="3.4" y="2.2" width="8.4" height="5.8" fill="#a2a2a2"/><rect x="6" y="3.5" width="3.2" height="3.2" fill="#dcdcdc"/><path d="M3.8 3.6h1.8M3.8 5h1.8M3.8 6.4h1.8M9.6 3.6h1.8M9.6 5h1.8M9.6 6.4h1.8" stroke="#e6e6e6" stroke-width=".5"/></g><g transform="translate(0,220.3)"><path d="M3.8 1.2v8" stroke="#333" stroke-width=".7"/><rect x="4.6" y="2" width="4" height="2.6" fill="#333"/><rect x="4.6" y="5.8" width="6.8" height="2.6" fill="#333"/></g><g transform="translate(0,234)"><path d="M3.4 1.8v6.8M11.8 1.8v6.8" stroke="#333" stroke-width="1.1"/><path d="M5 5.2h5.2M6.2 4l-1.2 1.2 1.2 1.2M9 4l1.2 1.2L9 6.4" stroke="#333" stroke-width=".7" fill="none"/></g><g transform="translate(0,247.8)"><path d="M3.8 7.9h9L9.3 2.3z" fill="none" stroke="#333" stroke-width=".8"/></g><g transform="translate(0,261.6)"><rect x="2.6" y=".8" width="6.2" height="6" fill="#555" stroke="#333" stroke-width=".6"/><rect x="6.4" y="4.6" width="5.2" height="5" fill="#eee" stroke="#222" stroke-width="1"/></g><g transform="translate(0,282)"><path d="M4 1.6h4l3.6 3.4-3.6 3.4H4z" fill="#eee" stroke="#444" stroke-width=".7"/><path d="M5.4 3.6h2M5.4 5h2.6M5.4 6.4h1.6" stroke="#666" stroke-width=".5"/><path d="M7 9.8l1-2.4" stroke="#444" stroke-width=".7"/></g></svg>
<svg class="a" style="left:0;top:0" width="820" height="460"><path d="M53.2 55v35M131 55v9.5M65 74v-9.5h137V74M317.3 55v35M616 55v8.5M543.3 74.5v-11h154.3V74M754.7 123h29.7v280h-29.7M784.4 259.8h10M26 321.4h34.7M86.2 146.5L33.2 232M78.3 176.5L33.2 232L24.5 240.5M26 156.5h14" stroke="#e8622c" stroke-width="1.1" fill="none"/></svg>
<div class="circ" style="left:45.5px;top:40.2px"></div><div class="cl" style="left:45.5px;top:40.2px">A</div>
<div class="circ" style="left:123.3px;top:40.2px"></div><div class="cl" style="left:123.3px;top:40.2px">B</div>
<div class="circ" style="left:309.6px;top:40.2px"></div><div class="cl" style="left:309.6px;top:40.2px">C</div>
<div class="circ" style="left:608.4px;top:40.4px"></div><div class="cl" style="left:608.4px;top:40.4px">D</div>
<div class="circ" style="left:794px;top:252.1px"></div><div class="cl" style="left:794px;top:252.1px">E</div>
<div class="circ" style="left:10.7px;top:313.7px"></div><div class="cl" style="left:10.7px;top:313.7px">F</div>
<div class="circ" style="left:10px;top:234.6px"></div><div class="cl" style="left:10px;top:234.6px">G</div>
<div class="circ" style="left:11.5px;top:148.7px"></div><div class="cl" style="left:11.5px;top:148.7px">H</div>
</div></body></html>
